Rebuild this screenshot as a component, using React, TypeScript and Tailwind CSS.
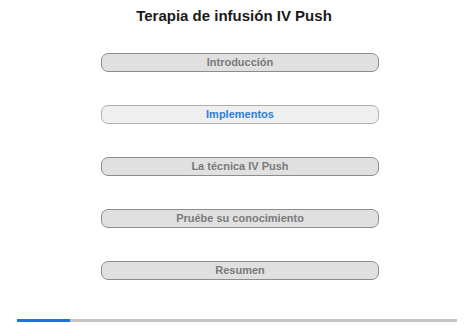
const items = [
  { label: "Introducción", active: false },
  { label: "Implementos", active: true },
  { label: "La técnica IV Push", active: false },
  { label: "Pruébe su conocimiento", active: false },
  { label: "Resumen", active: false },
];

const App = () => {
  return (
    <div
      className="w-[474px] h-[325px] bg-white flex flex-col items-center"
      style={{ fontFamily: '"Liberation Sans", Arial, sans-serif' }}
    >
      <h1 className="mt-[6px] mr-[6px] h-[19px] text-[15px] leading-[19px] font-bold text-[#1a1a1a]">
        Terapia de infusión IV Push
      </h1>

      <div className="mt-[28px] ml-[6px] flex flex-col gap-[33px]">
        {items.map((item) => (
          <div
            key={item.label}
            className={
              item.active
                ? "w-[278px] h-[19px] rounded-[7px] border border-[#b0b0b0] bg-[#efefef] flex items-center justify-center text-[11px] font-bold text-[#2a7ee0]"
                : "w-[278px] h-[19px] rounded-[7px] border border-[#8c8c8c] bg-[#e0e0e0] flex items-center justify-center text-[11px] font-bold text-[#7a7a7a]"
            }
          >
            {item.label}
          </div>
        ))}
      </div>

      <div className="mt-[39px] w-[440px] h-[3px] bg-[#c4c4c4] flex">
        <div className="w-[53px] h-full bg-[#1a73e0]" />
      </div>
    </div>
  );
};

export default App;
